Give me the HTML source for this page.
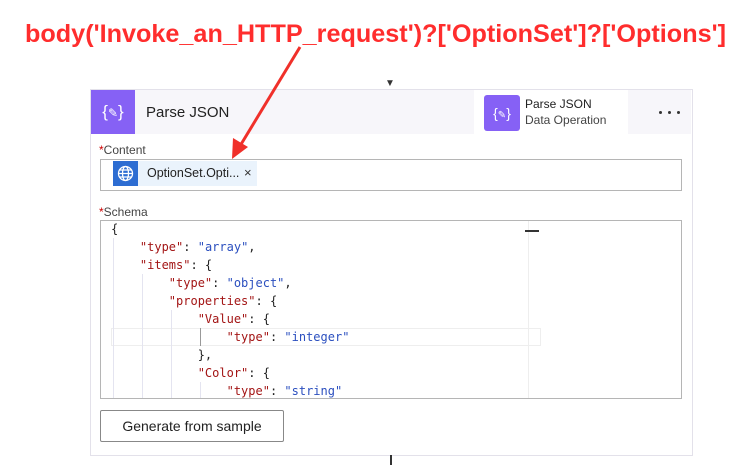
<!DOCTYPE html>
<html><head><meta charset="utf-8"><style>
body{margin:0;width:750px;height:465px;background:#fff;position:relative;overflow:hidden;font-family:"Liberation Sans",sans-serif;}
.abs{position:absolute}
.code{font-family:"DejaVu Sans Mono","Liberation Mono",monospace;font-size:12px;white-space:pre;line-height:18px;color:#222}
.k{color:#a31515}.s{color:#2b4fbf}
</style></head><body>
<!-- card -->
<div class="abs" style="left:90px;top:89px;width:601px;height:365px;border:1px solid #e3e1ea;background:#fff"></div>
<div class="abs" style="left:91px;top:90px;width:600px;height:44px;background:#f7f6fa"></div>
<div class="abs" style="left:91px;top:90px;width:44px;height:44px;background:#8661f5;color:#fff;font-size:17px;text-align:center;line-height:44px">{<span style="font-size:12px">✎</span>}</div>
<div class="abs" style="left:146px;top:104px;font-size:15px;color:#222">Parse JSON</div>
<div class="abs" style="left:474px;top:90px;width:154px;height:44px;background:#fff"></div>
<div class="abs" style="left:484px;top:95px;width:36px;height:36px;background:#8661f5;border-radius:3px;color:#fff;font-size:14px;text-align:center;line-height:36px">{<span style="font-size:10px">✎</span>}</div>
<div class="abs" style="left:525px;top:96px;font-size:12px;color:#222;line-height:16px">Parse JSON<br><span style="color:#444">Data Operation</span></div>
<div class="abs" style="left:659px;top:111px;width:3px;height:3px;border-radius:50%;background:#333"></div>
<div class="abs" style="left:668px;top:111px;width:3px;height:3px;border-radius:50%;background:#333"></div>
<div class="abs" style="left:677px;top:111px;width:3px;height:3px;border-radius:50%;background:#333"></div>
<div class="abs" style="left:385px;top:78px;font-size:10px;color:#333">▼</div>
<!-- content -->
<div class="abs" style="left:99px;top:143px;font-size:12px;color:#444"><span style="color:#c00">*</span>Content</div>
<div class="abs" style="left:100px;top:159px;width:580px;height:30px;border:1px solid #b5b5b5"></div>
<div class="abs" style="left:113px;top:161px;width:144px;height:25px;background:#eaf3fc"></div>
<div class="abs" style="left:113px;top:161px;width:25px;height:25px;background:#2d6dd2"></div>
<svg class="abs" style="left:117px;top:165px" width="17" height="17" viewBox="0 0 17 17" fill="none" stroke="#fff" stroke-width="1.3"><circle cx="8.5" cy="8.5" r="7"/><ellipse cx="8.5" cy="8.5" rx="3" ry="7"/><path d="M1.5 8.5h14M2.5 5h12M2.5 12h12"/></svg>
<div class="abs" style="left:147px;top:166px;font-size:12.5px;color:#222">OptionSet.Opti...</div>
<div class="abs" style="left:244px;top:165px;font-size:13px;color:#333">×</div>
<!-- schema -->
<div class="abs" style="left:99px;top:205px;font-size:12px;color:#444"><span style="color:#c00">*</span>Schema</div>
<div class="abs" style="left:100px;top:220px;width:580px;height:177px;border:1px solid #b5b5b5;overflow:hidden">
<div class="abs" style="left:10px;top:107px;width:428px;height:16px;border:1px solid #eee"></div>
<div class="abs" style="left:427px;top:0;width:1px;height:178px;background:#eee"></div>
<div class="abs" style="left:12px;top:17px;width:1px;height:160px;background:#e4e4f0"></div>
<div class="abs" style="left:41px;top:53px;width:1px;height:124px;background:#e4e4f0"></div>
<div class="abs" style="left:70px;top:89px;width:1px;height:88px;background:#e4e4f0"></div>
<div class="abs" style="left:99px;top:107px;width:1px;height:18px;background:#999"></div>
<div class="abs" style="left:99px;top:161px;width:1px;height:16px;background:#e4e4f0"></div>
<div class="abs" style="left:424px;top:9px;width:14px;height:2px;background:#333"></div>
<div class="abs code" style="left:10px;top:-1px">{
    <span class="k">"type"</span>: <span class="s">"array"</span>,
    <span class="k">"items"</span>: {
        <span class="k">"type"</span>: <span class="s">"object"</span>,
        <span class="k">"properties"</span>: {
            <span class="k">"Value"</span>: {
                <span class="k">"type"</span>: <span class="s">"integer"</span>
            },
            <span class="k">"Color"</span>: {
                <span class="k">"type"</span>: <span class="s">"string"</span></div>
</div>
<div class="abs" style="left:100px;top:410px;width:182px;height:30px;border:1px solid #888;border-radius:2px;font-size:14px;color:#222;text-align:center;line-height:30px">Generate from sample</div>
<div class="abs" style="left:390px;top:455px;width:2px;height:10px;background:#333"></div>
<!-- annotation -->
<svg class="abs" style="left:0;top:0" width="750" height="200">
<text x="25" y="42" textLength="701" lengthAdjust="spacingAndGlyphs" font-family="Liberation Sans" font-weight="bold" font-size="25" fill="#ff2d2d">body('Invoke_an_HTTP_request')?['OptionSet']?['Options']</text>
<line x1="300" y1="47" x2="240" y2="146" stroke="#f0302a" stroke-width="3"/>
<polygon points="232,159 233,138 248,147" fill="#f0302a"/>
</svg>
</body></html>
